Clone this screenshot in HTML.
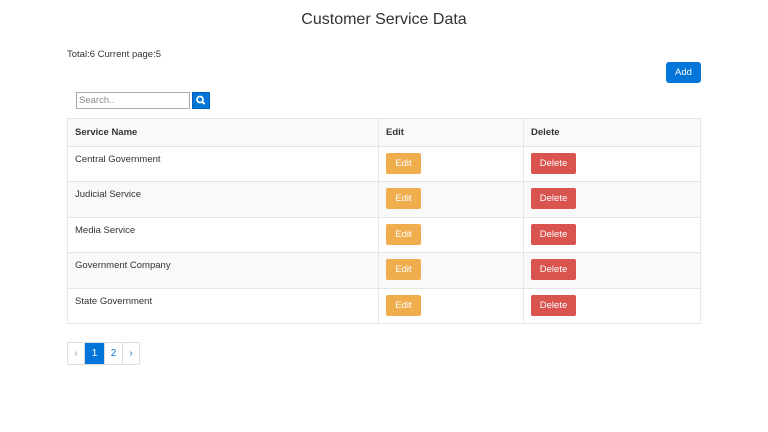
<!DOCTYPE html>
<html><head><style>
*{box-sizing:border-box;margin:0;padding:0}
body{width:768px;height:432px;background:#fff;font-family:"Liberation Sans",sans-serif;color:#333;position:relative;overflow:hidden}
.a{position:absolute}
h1{position:absolute;top:11px;left:0;width:768px;text-align:center;font-size:16px;font-weight:normal;color:#333}
.tot{left:67px;top:49px;font-size:9.5px}
.add{left:666px;top:62px;width:35px;height:21px;background:#0275d8;border-radius:3px;color:#fff;font-size:9.5px;text-align:center;line-height:21px}
.inp{left:76px;top:92px;width:114px;height:17px;border:1px solid #aaa;font-size:9.5px;color:#888;padding-left:2px;line-height:15px}
.sb{left:192px;top:92px;width:18px;height:17px;background:#0275d8;border:1px solid #0262b8}
table{position:absolute;left:67px;top:118px;width:634px;border-collapse:collapse;font-size:9.5px}
td,th{border:1px solid #e6e6e6;text-align:left;vertical-align:top;padding:0 7px}
th{height:28px;vertical-align:middle;font-weight:bold;background:#f9f9f9}
td{height:35.4px;padding-top:7px}
tr.s td{background:#f9f9f9}
.b{display:inline-block;height:21px;line-height:21px;border-radius:2px;color:#fff;font-size:9.5px;text-align:center;margin-top:-1px}
.e{width:35px;background:#f0ad4e}
.d{width:45px;background:#d9534f}
.pg{left:67px;top:342px;height:23px;display:flex;border:1px solid #ddd;border-radius:2px;font-size:10px}
.pg div{height:21px;line-height:21px;text-align:center;color:#0275d8;border-right:1px solid #ddd}
</style></head><body>
<h1>Customer Service Data</h1>
<div class="a tot">Total:6 Current page:5</div>
<div class="a add">Add</div>
<div class="a inp">Search..</div>
<div class="a sb"><svg width="16" height="15" viewBox="0 0 16 15"><circle cx="7" cy="6.5" r="3" fill="none" stroke="#fff" stroke-width="1.7"/><line x1="9.2" y1="8.7" x2="11.5" y2="11" stroke="#fff" stroke-width="2"/></svg></div>
<table>
<tr><th style="width:311px">Service Name</th><th style="width:145px">Edit</th><th>Delete</th></tr>
<tr><td>Central Government</td><td><span class="b e">Edit</span></td><td><span class="b d">Delete</span></td></tr>
<tr class="s"><td>Judicial Service</td><td><span class="b e">Edit</span></td><td><span class="b d">Delete</span></td></tr>
<tr><td>Media Service</td><td><span class="b e">Edit</span></td><td><span class="b d">Delete</span></td></tr>
<tr class="s"><td>Government Company</td><td><span class="b e">Edit</span></td><td><span class="b d">Delete</span></td></tr>
<tr><td>State Government</td><td><span class="b e">Edit</span></td><td><span class="b d">Delete</span></td></tr>
</table>
<div class="a pg"><div style="width:17px;color:#999">‹</div><div style="width:20px;background:#0275d8;color:#fff">1</div><div style="width:18px">2</div><div style="width:16px;border:none">›</div></div>
</body></html>
